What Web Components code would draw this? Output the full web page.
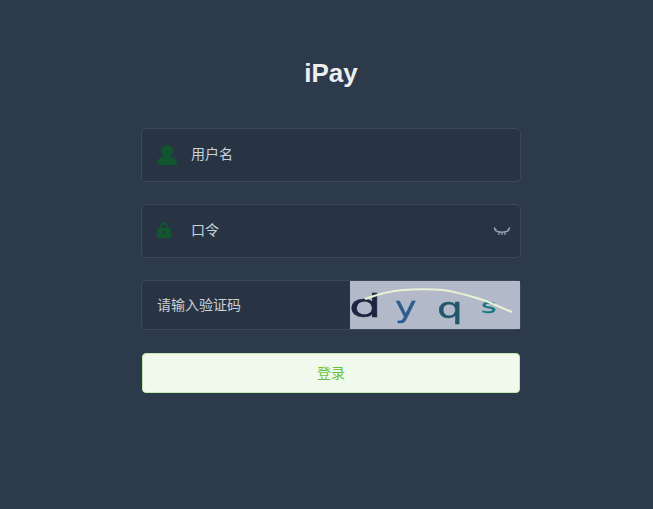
<!DOCTYPE html>
<html lang="zh">
<head>
<meta charset="utf-8">
<title>iPay</title>
<style>
  html, body { height: 100%; }
  body {
    margin: 0;
    background: #2d3a4b;
    font-family: "Liberation Sans", "Noto Sans CJK SC", sans-serif;
  }
</style>
</head>
<body>
<login-page>
  <login-field placeholder="用户名">
    <svg slot="icon" width="20" height="20" viewBox="0 0 20 20"><circle cx="10" cy="6" r="6" fill="#11562f"/><path d="M0 18c0-4.500 4.500-6.800 10-6.800s10 2.300 10 6.800c0 1.200-.8 2-2 2H2c-1.200 0-2-.8-2-2z" fill="#11562f"/></svg>
  </login-field>
  <login-field placeholder="口令">
    <svg slot="icon" width="20" height="20" viewBox="0 0 20 20"><path d="M3.500 8V6.500a3.500 3.500 0 0 1 7 0V8" transform="translate(0 -.5)" fill="none" stroke="#11562f" stroke-width="1.800"/><rect x="0" y="7" width="14" height="10" rx="1.500" fill="#11562f"/><circle cx="7" cy="11.500" r="1.500" fill="#2a3544"/></svg>
    <svg slot="trail" width="18" height="10" viewBox="0 0 18 10" fill="none" stroke="#98a8b8" stroke-width="1.200"><path d="M1.500 2.500c3 3.500 12 3.500 15 0M1 .5l2.500 3M17 .5l-2.500 3M6 5v3M12 5v3M9 5.500v2.500"/></svg>
  </login-field>
  <captcha-field placeholder="请输入验证码"></captcha-field>
  <login-button>登录</login-button>
</login-page>
<script>
class LoginPage extends HTMLElement {
  constructor() {
    super();
    this.attachShadow({ mode: 'open' });
    this.shadowRoot.innerHTML = `
      <style>
        :host { display: block; }
        .form {
          box-sizing: border-box;
          width: 380px;
          margin-left: 141px;
          padding-top: 58px;
          display: flex;
          flex-direction: column;
        }
        h3 {
          margin: 0 0 39px;
          font-size: 26px;
          line-height: 31px;
          font-weight: 700;
          color: #eee;
          text-align: center;
        }
        ::slotted(login-field), ::slotted(captcha-field) { margin-bottom: 22px; }
      </style>
      <div class="form">
        <h3>iPay</h3>
        <slot></slot>
      </div>
    `;
  }
}

class LoginField extends HTMLElement {
  constructor() {
    super();
    this.attachShadow({ mode: 'open' });
  }

  connectedCallback() {
    this.shadowRoot.innerHTML = `
      <style>
        :host { display: block; }
        .box {
          box-sizing: border-box;
          height: 54px;
          display: flex;
          align-items: center;
          padding: 0 9px 0 15px;
          background: rgba(0, 0, 0, .1);
          border: 1px solid rgba(255, 255, 255, .1);
          border-radius: 5px;
        }
        .icon { width: 20px; height: 20px; margin-right: 14px; display: flex; }
        .text { flex: 1; font-size: 14px; line-height: 20px; padding-bottom: 2px; color: #c9d1d9; }
        .trail { display: flex; margin-top: 1px; }
      </style>
      <div class="box">
        <span class="icon"><slot name="icon"></slot></span>
        <span class="text"></span>
        <span class="trail"><slot name="trail"></slot></span>
      </div>
    `;
    this.shadowRoot.querySelector('.text').textContent = this.getAttribute('placeholder') || '';
  }
}

class CaptchaField extends HTMLElement {
  constructor() {
    super();
    this.attachShadow({ mode: 'open' });
  }

  connectedCallback() {
    this.shadowRoot.innerHTML = `
      <style>
        :host { display: block; }
        .box {
          box-sizing: border-box;
          height: 50px;
          display: flex;
          background: rgba(0, 0, 0, .1);
          border: 1px solid rgba(255, 255, 255, .1);
          border-radius: 5px;
        }
        .text {
          flex: 1;
          padding-left: 15px;
          font-size: 14px;
          line-height: 48px;
          color: #c9d1d9;
        }
        svg { width: 170px; height: 48px; display: block; }
        text { font-family: "DejaVu Sans", sans-serif; }
      </style>
      <div class="box">
        <span class="text"></span>
        <svg viewBox="0 0 170 48">
          <defs><filter id="soft"><feGaussianBlur stdDeviation=".5"/></filter></defs>
          <rect width="170" height="48" fill="#b2b9c9"/>
          <g filter="url(#soft)">
            <text transform="translate(-1 36) scale(1.6 1)" font-size="32" fill="#1c2540" stroke="#1c2540" stroke-width=".4">d</text>
            <text transform="translate(45 36) scale(1.3 1)" font-size="28" fill="#2d5c8f" stroke="#2d5c8f" stroke-width=".3">y</text>
            <text transform="translate(87 36.500) scale(1.4 1)" font-size="29" fill="#21566b" stroke="#21566b" stroke-width=".4">q</text>
            <text transform="translate(131 32) scale(1.5 1)" font-size="20" fill="#137a80" stroke="#137a80" stroke-width=".3">s</text>
            <path d="M15 18C26 14 38 10 53 9 66 8 80 8 93 9 108 11 120 15 133 19 144 23 152 27 162 31" fill="none" stroke="#e8f0d4" stroke-width="2.200"/>
          </g>
        </svg>
      </div>
    `;
    this.shadowRoot.querySelector('.text').textContent = this.getAttribute('placeholder') || '';
  }
}

class LoginButton extends HTMLElement {
  constructor() {
    super();
    this.attachShadow({ mode: 'open' });
    this.shadowRoot.innerHTML = `
      <style>
        :host { display: block; padding: 1px; }
        button {
          box-sizing: border-box;
          width: 100%;
          height: 40px;
          padding: 0 0 3px;
          background: #f0f9eb;
          border: 1px solid #c2e7b0;
          border-radius: 4px;
          color: #67c23a;
          font: inherit;
          font-size: 14px;
        }
      </style>
      <button type="button"><slot></slot></button>
    `;
  }
}

customElements.define('login-page', LoginPage);
customElements.define('login-field', LoginField);
customElements.define('captcha-field', CaptchaField);
customElements.define('login-button', LoginButton);
</script>
</body>
</html>
